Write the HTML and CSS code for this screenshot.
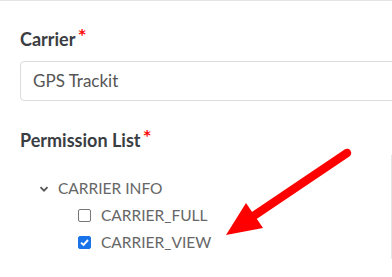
FILE: index.html
```html
<!DOCTYPE html>
<html>
<head>
<meta charset="utf-8">
<link rel="stylesheet" href="styles.css">
</head>
<body>
<div class="page">
  <div class="field">
    <label class="label">Carrier<span class="req">*</span></label>
    <div class="input">GPS Trackit</div>
  </div>
  <div class="field perm">
    <label class="label">Permission List<span class="req">*</span></label>
    <div class="tree">
      <div class="node">
        <svg class="chev" width="10" height="8" viewBox="0 0 10 8"><path d="M1.5 2.2 L5 5.7 L8.5 2.2" fill="none" stroke="#555" stroke-width="1.8"/></svg>
        <span>CARRIER INFO</span>
      </div>
      <div class="leaf"><span class="box"></span><span>CARRIER_FULL</span></div>
      <div class="leaf"><span class="box checked"><svg width="13" height="13" viewBox="0 0 13 13"><path d="M3 6.6 L5.5 9 L10 4" fill="none" stroke="#fff" stroke-width="1.9"/></svg></span><span>CARRIER_VIEW</span></div>
    </div>
  </div>
  <div class="edge"></div>
  <svg class="arrow" width="392" height="277" viewBox="0 0 392 277">
    <line x1="347" y1="153" x2="252" y2="217" stroke="#ff0000" stroke-width="8.5" stroke-linecap="round"/>
    <polygon points="226,235 246,203 263,228" fill="#ff0000"/>
  </svg>
</div>
</body>
</html>
```
FILE: styles.css
```css
html, body {
  margin: 0;
  padding: 0;
  background: #fff;
}
.page {
  position: relative;
  width: 392px;
  height: 277px;
  overflow: hidden;
  border-top: 1px solid #e4e4e4;
  box-sizing: border-box;
  font-family: Lato, "Liberation Sans", sans-serif;
  padding-left: 20px;
}
.field {
  display: flex;
  flex-direction: column;
}
.label {
  font-weight: 700;
  font-size: 18px;
  color: #3a3d42;
  margin-top: 27px;
  line-height: 22px;
}
.req {
  font-family: "DejaVu Sans", sans-serif;
  font-weight: 700;
  color: #f00;
  font-size: 14px;
  line-height: 0;
  margin-left: 3px;
  vertical-align: 7px;
}
.input {
  margin-top: 11px;
  height: 40px;
  width: 400px;
  box-sizing: border-box;
  border: 1px solid #dcdcdc;
  border-radius: 4px;
  padding-left: 12px;
  line-height: 38px;
  font-size: 17px;
  color: #555;
}
.perm .label {
  margin-top: 28px;
}
.tree {
  margin-top: 27px;
  padding-left: 19px;
  font-size: 15.5px;
  color: #666;
}
.node {
  display: flex;
  align-items: center;
  height: 20px;
  gap: 9px;
}
.chev {
  margin-top: 1px;
}
.leaf {
  display: flex;
  align-items: center;
  height: 20px;
  margin-top: 7px;
  padding-left: 39px;
  gap: 10px;
}
.box {
  width: 13px;
  height: 13px;
  box-sizing: border-box;
  border: 1px solid #777;
  border-radius: 2px;
  background: #fff;
  display: flex;
  align-items: center;
  justify-content: center;
}
.box.checked {
  background: #1a73e8;
  border-color: #1a73e8;
}
.box.checked svg {
  flex: none;
}
.edge {
  position: absolute;
  right: 0;
  top: 154px;
  width: 1px;
  height: 104px;
  background: #e6e6e6;
}
.arrow {
  position: absolute;
  left: 0;
  top: -1px;
}
```
